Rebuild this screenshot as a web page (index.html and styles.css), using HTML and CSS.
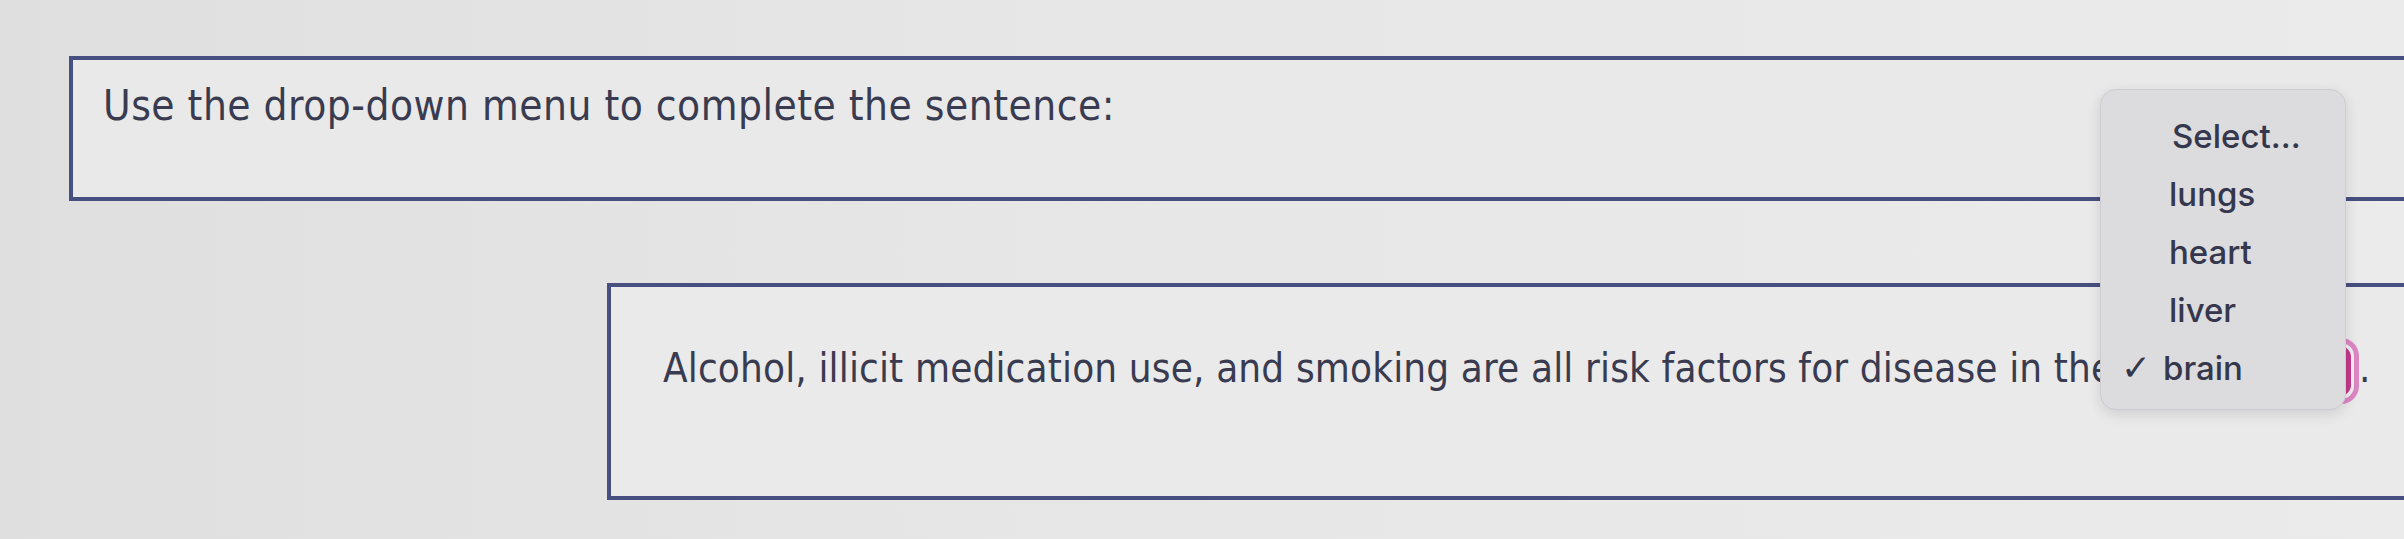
FILE: index.html
```html
<!DOCTYPE html>
<html lang="en">
<head>
    <meta charset="UTF-8">
    <meta name="viewport" content="width=device-width, initial-scale=1.0">
    <title>Drop-down question</title>
    <link rel="stylesheet" href="styles.css">
</head>
<body>
    <div class="page">
        <div class="prompt-box">
            <p class="prompt">Use the drop-down menu to complete the sentence:</p>
        </div>

        <div class="question-box">
            <p class="sentence">
                Alcohol, illicit medication use, and smoking are all risk factors for disease in the
                <span class="select-wrap"><span class="select-box">brain</span></span>.
            </p>
        </div>
    </div>

    <ul class="dropdown">
        <li>Select...</li>
        <li>lungs</li>
        <li>heart</li>
        <li>liver</li>
        <li class="checked"><span class="check">&#10003;</span>brain</li>
    </ul>
</body>
</html>
```

FILE: styles.css
```css
body {
    margin: 0;
    font-family: "DejaVu Sans Condensed", "DejaVu Sans", sans-serif;
    background: linear-gradient(90deg, #dfdfdf, #e6e6e6 40%, #ebebeb);
    height: 539px;
    overflow: hidden;
    color: #393b50;
}

.page {
    padding-top: 56px;
}

.prompt-box {
    margin-left: 69px;
    height: 145px;
    border: 4px solid #474f80;
    border-right: none;
    box-sizing: border-box;
    background: #e9e9e9;
    padding: 20px 0 0 30px;
}

.prompt {
    margin: 0;
    font-size: 42px;
    letter-spacing: 0.5px;
    line-height: 52px;
}

.question-box {
    margin: 82px 0 0 607px;
    height: 217px;
    border: 4px solid #474f80;
    border-right: none;
    box-sizing: border-box;
    background: #eaeaea;
    padding: 50px 0 0 52px;
}

.sentence {
    margin: 0;
    font-size: 40px;
    letter-spacing: 0.15px;
    line-height: 62px;
    white-space: nowrap;
}

/* closed select, ringed while its list is open */
.select-wrap {
    display: inline-block;
    vertical-align: middle;
    width: 234px;
    height: 66px;
    border: 5px solid #dc86c4;
    border-radius: 18px;
    padding: 3px;
    background: #f3eef2;
    box-sizing: border-box;
}

.select-box {
    display: block;
    height: 100%;
    border-radius: 11px;
    background: #c23a8a;
    color: #fff;
    font-size: 30px;
    line-height: 50px;
    padding-left: 14px;
}

.dropdown {
    position: absolute;
    left: 2100px;
    top: 89px;
    width: 246px;
    margin: 0;
    padding: 17px 0 12px;
    list-style: none;
    background: #dcdcde;
    border: 1px solid #cdcdd1;
    border-radius: 16px;
    box-sizing: border-box;
    box-shadow: 0 4px 14px rgba(0, 0, 0, 0.12);
    font-family: Inter, "Liberation Sans", sans-serif;
    font-size: 33px;
    font-weight: 500;
    color: #35374d;
}

.dropdown li {
    height: 58px;
    line-height: 58px;
    padding-left: 68px;
    position: relative;
}

.dropdown li:first-child {
    padding-left: 71px;
}

.dropdown .checked {
    padding-left: 62px;
}

.dropdown .check {
    position: absolute;
    left: 20px;
    font-family: "DejaVu Sans", sans-serif;
    font-size: 36px;
}
```
